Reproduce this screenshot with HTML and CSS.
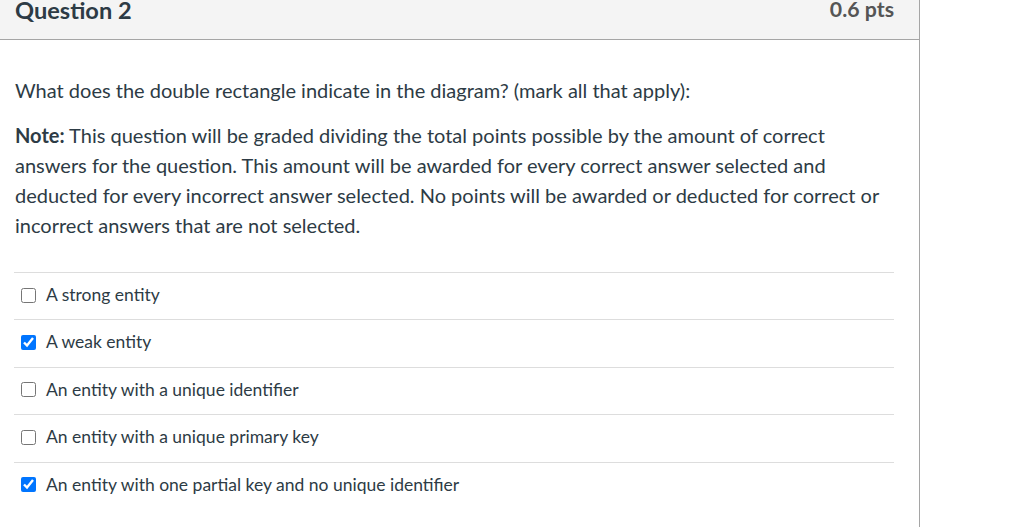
FILE: index.html
```html
<!DOCTYPE html>
<html>
<head>
<meta charset="utf-8">
<link rel="stylesheet" href="styles.css">
</head>
<body>
<div class="page">
  <div class="question">
    <div class="q-header">
      <span class="q-title">Question 2</span>
      <span class="q-pts">0.6 pts</span>
    </div>
    <div class="q-body">
      <p class="q-text">What does the double rectangle indicate in the diagram? (mark all that apply):</p>
      <p class="q-note"><strong>Note:</strong> This question will be graded dividing the total points possible by the amount of correct answers for the question. This amount will be awarded for every correct answer selected and deducted for every incorrect answer selected. No points will be awarded or deducted for correct or incorrect answers that are not selected.</p>
      <div class="answers">
        <label class="answer"><input type="checkbox" class="cb"><span>A strong entity</span></label>
        <label class="answer"><input type="checkbox" class="cb" checked><span>A weak entity</span></label>
        <label class="answer"><input type="checkbox" class="cb"><span>An entity with a unique identifier</span></label>
        <label class="answer"><input type="checkbox" class="cb"><span>An entity with a unique primary key</span></label>
        <label class="answer"><input type="checkbox" class="cb" checked><span>An entity with one partial key and no unique identifier</span></label>
      </div>
    </div>
  </div>
</div>
</body>
</html>
```
FILE: styles.css
```css
html, body {
  margin: 0;
  padding: 0;
  background: #fff;
}
body {
  font-family: Lato, "Liberation Sans", sans-serif;
  color: #2d3b45;
  overflow: hidden;
}
.page {
  height: 527px;
}
.question {
  width: 920px;
  height: 527px;
  border-right: 1px solid #a5a5a5;
  box-sizing: border-box;
}
.q-header {
  display: flex;
  justify-content: space-between;
  align-items: flex-start;
  height: 39px;
  background: #f4f4f4;
  border-bottom: 1px solid #a5a5a5;
  padding: 0 25px 0 15px;
}
.q-title {
  font-size: 23.6px;
  font-weight: 700;
  line-height: 20px;
  color: #2d3b45;
}
.q-pts {
  font-size: 21.3px;
  font-weight: 700;
  line-height: 18px;
  color: #555;
}
.q-body {
  padding: 35px 25px 0 14px;
}
.q-text, .q-note {
  margin: 0;
  font-size: 20px;
  line-height: 30px;
  padding-left: 1px;
}
.q-note {
  margin-top: 15px;
}
.answers {
  margin-top: 32px;
}
.answer {
  display: flex;
  align-items: center;
  height: 43.5px;
  box-sizing: content-box;
  padding-bottom: 3px;
  border-top: 1px solid #ddd;
  font-size: 17.5px;
  color: #2d3b45;
}
.answer:first-child {
  height: 43px;
}
.cb {
  width: 15px;
  height: 15px;
  margin: 1px 10px 0 7px;
  accent-color: #0075ff;
}
```
